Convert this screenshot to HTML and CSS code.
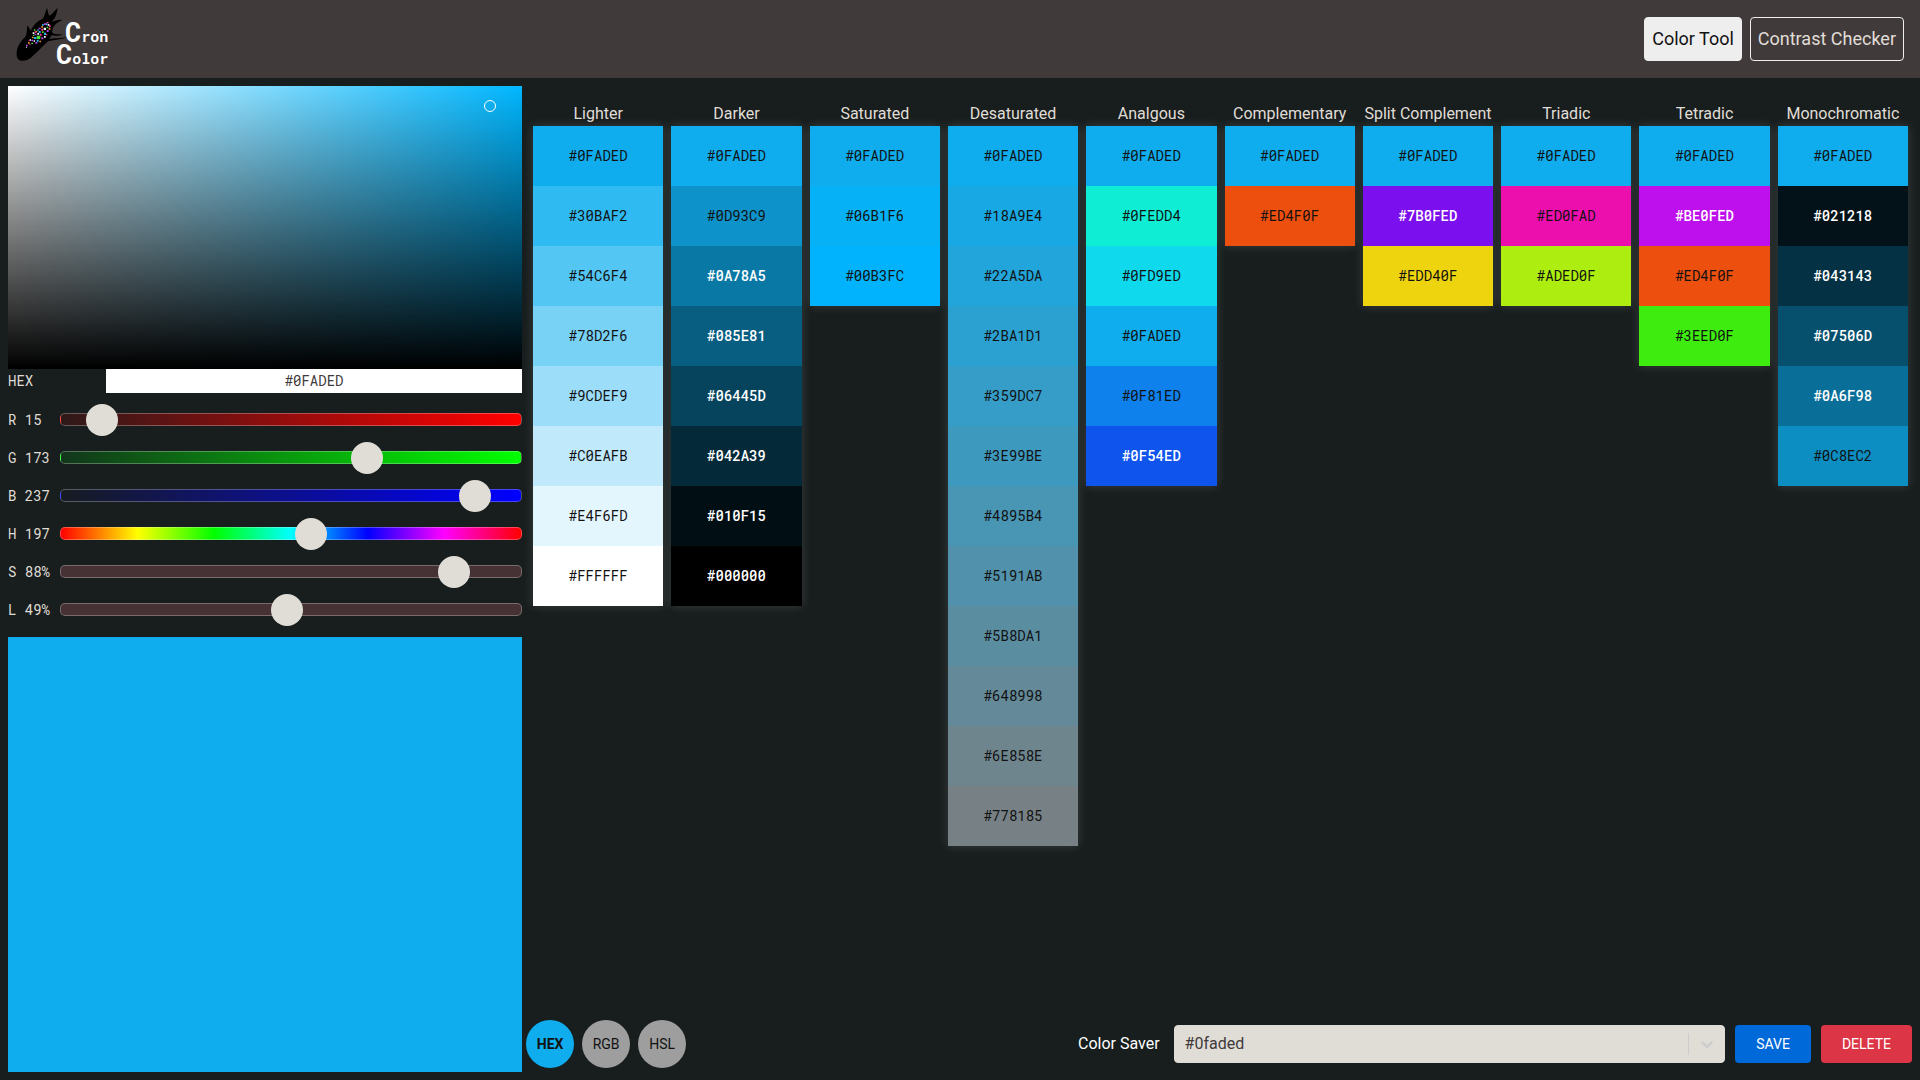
FILE: index.html
```html
<!DOCTYPE html>
<html lang="en">
<head>
<meta charset="utf-8">
<meta name="viewport" content="width=device-width, initial-scale=1">
<title>Cron Color</title>
<link rel="stylesheet" href="styles.css">
</head>
<body>
<header class="topbar">
  <a class="brand" href="#">
    <svg class="brand-mark" viewBox="48 24 156 162" width="52" height="54" aria-hidden="true">
      <path d="M50 158C50 142 62 124 76 110C82 100 80 90 82 76C86 82 90 86 92 92C100 74 112 62 128 56C136 46 136 34 141 24C144 34 144 42 148 47C156 44 164 32 172 24C172 42 164 58 154 66C164 64 176 58 187 60C174 66 162 74 158 86C156 92 156 96 158 100C168 104 178 102 188 104C176 108 166 108 156 106C150 110 150 114 148 117C160 114 178 116 200 112C182 120 160 120 144 124C128 138 116 154 98 168C84 184 62 186 55 178C50 172 50 166 50 158Z" fill="#000"/>
      <g fill="#f08a28"><path d="M84 126h5v5h-5zM96 110h5v5h-5zM107 92h5v5h-5zM124 78h5v5h-5zM133 100h5v5h-5zM146 84h5v5h-5zM118 122h5v5h-5z"/></g>
      <g fill="#b040e8"><path d="M78 134h5v5h-5zM94 119h6v5h-6zM104 101h5v5h-5zM116 83h6v5h-6zM132 70h6v5h-6zM140 90h6v6h-6zM124 112h6v6h-6zM106 126h6v5h-6z"/></g>
      <g fill="#fff"><path d="M78 140h3v3h-3zM89 118h4v4h-4zM98 97h5v5h-5zM112 99h5v5h-5zM131 83h7v7h-7zM143 72h5v5h-5zM132 108h5v5h-5zM101 121h4v4h-4z"/></g>
      <g fill="#46df35"><path d="M110 107h11v10h-11zM102 88h4v4h-4zM126 94h5v5h-5zM140 80h5v5h-5zM99 104h4v4h-4zM94 128h5v4h-5z"/></g>
      <g fill="#2fb4ee"><path d="M102 111h7v6h-7zM116 93h6v6h-6zM132 98h6v7h-6zM126 72h5v5h-5zM112 88h4v4h-4zM138 70h4v6h-4zM110 119h6v6h-6z"/></g>
      <g fill="#f03c8c"><path d="M86 120h3v4h-3zM104 94h5v5h-5zM119 101h6v6h-6zM124 86h5v6h-5zM140 66h6v4h-6zM147 76h5v6h-5zM138 102h4v4h-4zM88 131h4v3h-4z"/></g>
    </svg>
    <span class="brand-name"><span>Cron</span><span>Color</span></span>
  </a>
  <nav class="nav">
    <button class="nav-btn nav-btn-active" type="button">Color Tool</button>
    <button class="nav-btn" type="button">Contrast Checker</button>
  </nav>
</header>
<main class="app">
  <section class="controls">
    <div class="picker"><span class="picker-cursor"></span></div>
    <div class="hex-row"><label for="hex">HEX</label><input id="hex" type="text" value="#0FADED"></div>
    <div class="sliders">
      <div class="slider"><label for="r">R 15</label><input id="r" class="red" type="range" min="0" max="255" value="15"></div>
      <div class="slider"><label for="g">G 173</label><input id="g" class="green" type="range" min="0" max="255" value="173"></div>
      <div class="slider"><label for="b">B 237</label><input id="b" class="blue" type="range" min="0" max="255" value="237"></div>
      <div class="slider"><label for="h">H 197</label><input id="h" class="hue" type="range" min="0" max="360" value="197"></div>
      <div class="slider"><label for="s">S 88%</label><input id="s" type="range" min="0" max="100" value="88"></div>
      <div class="slider"><label for="l">L 49%</label><input id="l" type="range" min="0" max="100" value="49"></div>
    </div>
    <div class="preview" style="background:#0FADED"></div>
  </section>
  <section class="workspace">
    <div class="palettes">
      <div class="palette"><h2>Lighter</h2><div class="stack">
        <button class="swatch" style="background:#0FADED">#0FADED</button>
        <button class="swatch" style="background:#30BAF2">#30BAF2</button>
        <button class="swatch" style="background:#54C6F4">#54C6F4</button>
        <button class="swatch" style="background:#78D2F6">#78D2F6</button>
        <button class="swatch" style="background:#9CDEF9">#9CDEF9</button>
        <button class="swatch" style="background:#C0EAFB">#C0EAFB</button>
        <button class="swatch" style="background:#E4F6FD">#E4F6FD</button>
        <button class="swatch" style="background:#FFFFFF">#FFFFFF</button>
      </div></div>
      <div class="palette"><h2>Darker</h2><div class="stack">
        <button class="swatch" style="background:#0FADED">#0FADED</button>
        <button class="swatch" style="background:#0D93C9">#0D93C9</button>
        <button class="swatch on-dark" style="background:#0A78A5">#0A78A5</button>
        <button class="swatch on-dark" style="background:#085E81">#085E81</button>
        <button class="swatch on-dark" style="background:#06445D">#06445D</button>
        <button class="swatch on-dark" style="background:#042A39">#042A39</button>
        <button class="swatch on-dark" style="background:#010F15">#010F15</button>
        <button class="swatch on-dark" style="background:#000000">#000000</button>
      </div></div>
      <div class="palette"><h2>Saturated</h2><div class="stack">
        <button class="swatch" style="background:#0FADED">#0FADED</button>
        <button class="swatch" style="background:#06B1F6">#06B1F6</button>
        <button class="swatch" style="background:#00B3FC">#00B3FC</button>
      </div></div>
      <div class="palette"><h2>Desaturated</h2><div class="stack">
        <button class="swatch" style="background:#0FADED">#0FADED</button>
        <button class="swatch" style="background:#18A9E4">#18A9E4</button>
        <button class="swatch" style="background:#22A5DA">#22A5DA</button>
        <button class="swatch" style="background:#2BA1D1">#2BA1D1</button>
        <button class="swatch" style="background:#359DC7">#359DC7</button>
        <button class="swatch" style="background:#3E99BE">#3E99BE</button>
        <button class="swatch" style="background:#4895B4">#4895B4</button>
        <button class="swatch" style="background:#5191AB">#5191AB</button>
        <button class="swatch" style="background:#5B8DA1">#5B8DA1</button>
        <button class="swatch" style="background:#648998">#648998</button>
        <button class="swatch" style="background:#6E858E">#6E858E</button>
        <button class="swatch" style="background:#778185">#778185</button>
      </div></div>
      <div class="palette"><h2>Analgous</h2><div class="stack">
        <button class="swatch" style="background:#0FADED">#0FADED</button>
        <button class="swatch" style="background:#0FEDD4">#0FEDD4</button>
        <button class="swatch" style="background:#0FD9ED">#0FD9ED</button>
        <button class="swatch" style="background:#0FADED">#0FADED</button>
        <button class="swatch" style="background:#0F81ED">#0F81ED</button>
        <button class="swatch on-dark" style="background:#0F54ED">#0F54ED</button>
      </div></div>
      <div class="palette"><h2>Complementary</h2><div class="stack">
        <button class="swatch" style="background:#0FADED">#0FADED</button>
        <button class="swatch" style="background:#ED4F0F">#ED4F0F</button>
      </div></div>
      <div class="palette"><h2>Split Complement</h2><div class="stack">
        <button class="swatch" style="background:#0FADED">#0FADED</button>
        <button class="swatch on-dark" style="background:#7B0FED">#7B0FED</button>
        <button class="swatch" style="background:#EDD40F">#EDD40F</button>
      </div></div>
      <div class="palette"><h2>Triadic</h2><div class="stack">
        <button class="swatch" style="background:#0FADED">#0FADED</button>
        <button class="swatch" style="background:#ED0FAD">#ED0FAD</button>
        <button class="swatch" style="background:#ADED0F">#ADED0F</button>
      </div></div>
      <div class="palette"><h2>Tetradic</h2><div class="stack">
        <button class="swatch" style="background:#0FADED">#0FADED</button>
        <button class="swatch on-dark" style="background:#BE0FED">#BE0FED</button>
        <button class="swatch" style="background:#ED4F0F">#ED4F0F</button>
        <button class="swatch" style="background:#3EED0F">#3EED0F</button>
      </div></div>
      <div class="palette"><h2>Monochromatic</h2><div class="stack">
        <button class="swatch" style="background:#0FADED">#0FADED</button>
        <button class="swatch on-dark" style="background:#021218">#021218</button>
        <button class="swatch on-dark" style="background:#043143">#043143</button>
        <button class="swatch on-dark" style="background:#07506D">#07506D</button>
        <button class="swatch on-dark" style="background:#0A6F98">#0A6F98</button>
        <button class="swatch" style="background:#0C8EC2">#0C8EC2</button>
      </div></div>
    </div>
    <footer class="toolbar">
      <div class="formats">
        <button class="format format-active" type="button">HEX</button>
        <button class="format" type="button">RGB</button>
        <button class="format" type="button">HSL</button>
      </div>
      <form class="saver">
        <label for="saved">Color Saver</label>
        <div class="select">
          <select id="saved"><option>#0faded</option></select>
          <span class="select-icon">
            <svg viewBox="0 0 20 20" width="20" height="20" aria-hidden="true"><path d="M4.516 7.548c0.436-0.446 1.043-0.481 1.576 0l3.908 3.747 3.908-3.747c0.533-0.481 1.141-0.446 1.574 0 0.436 0.445 0.408 1.197 0 1.615-0.406 0.418-4.695 4.502-4.695 4.502-0.217 0.223-0.502 0.335-0.787 0.335s-0.57-0.112-0.789-0.335c0 0-4.287-4.084-4.695-4.502s-0.436-1.17 0-1.615z" fill="#ccc"/></svg>
          </span>
        </div>
        <button class="action save" type="button">SAVE</button>
        <button class="action delete" type="button">DELETE</button>
      </form>
    </footer>
  </section>
</main>
</body>
</html>
```
FILE: styles.css
```css
:root {
  --bg: #171e1d;
  --bar: #413a3a;
  --bone: #e0ddd7;
  --sans: Roboto, "Liberation Sans", sans-serif;
  --mono: "Roboto Mono", "DejaVu Sans Mono", monospace;
}

* { box-sizing: border-box; }

body {
  margin: 0;
  min-height: 100vh;
  display: flex;
  flex-direction: column;
  background: var(--bg);
  color: var(--bone);
  font: 16px/24px var(--sans);
}

button, input, select { font: inherit; color: inherit; margin: 0; }
button { cursor: pointer; }

.topbar {
  display: flex;
  justify-content: space-between;
  align-items: center;
  height: 78px;
  padding: 0 16px;
  background: var(--bar);
}

.brand {
  display: flex;
  align-items: flex-start;
  height: 62px;
  color: #fff;
  text-decoration: none;
}

.brand-mark { margin-right: -12px; }

.brand-name {
  display: flex;
  flex-direction: column;
  align-items: flex-end;
  gap: 2px;
  padding-top: 14px;
  font: bold 15px/20px var(--mono);
}

.brand-name span { display: block; height: 20px; }
.brand-name span::first-letter { font-size: 27px; line-height: 20px; }

.nav { display: flex; gap: 8px; }

.nav-btn {
  height: 44px;
  padding: 0 7px;
  border: 1px solid #eee;
  border-radius: 4px;
  background: transparent;
  font-size: 18px;
}

.nav-btn-active { background: #eee; color: #111; }

.app {
  flex: 1;
  display: grid;
  grid-template-columns: 27% 1fr;
  column-gap: 4px;
  padding: 8px;
}

.controls { display: flex; flex-direction: column; }

.picker {
  position: relative;
  aspect-ratio: 20 / 11;
  background:
    linear-gradient(to top, #000, transparent),
    linear-gradient(to right, #fff, hsl(197 100% 50%));
}

.picker-cursor {
  position: absolute;
  left: 93.7%;
  top: 7%;
  width: 12px;
  height: 12px;
  margin: -6px;
  border: 1px solid #fff;
  border-radius: 50%;
}

.hex-row {
  display: grid;
  grid-template-columns: 98px 1fr;
  font: 14px/24px var(--mono);
}

.hex-row input {
  width: 100%;
  height: 24px;
  padding: 0;
  border: 0;
  background: #fff;
  color: #413a3a;
  text-align: center;
}

.sliders { padding: 8px 0; }

.slider {
  display: grid;
  grid-template-columns: 52px 1fr;
  align-items: center;
  height: 38px;
  font: 14px/24px var(--mono);
}

.slider input {
  appearance: none;
  width: 100%;
  height: 13px;
  border: 1px solid rgb(255 255 255 / .28);
  border-radius: 5px;
  background: #463234;
}

.slider input::-webkit-slider-thumb {
  appearance: none;
  width: 32px;
  height: 32px;
  border-radius: 50%;
  background: var(--bone);
}

.slider .red { background: linear-gradient(to right, #2e1919, #f00); }
.slider .green { background: linear-gradient(to right, #12351b, #0f0); }
.slider .blue { background: linear-gradient(to right, #171c20, #00f); }
.slider .hue { background: linear-gradient(to right, #f00, #ff0, #0f0, #0ff, #00f, #f0f, #f00); }

.preview { flex: 1; min-height: 200px; }

.workspace {
  display: flex;
  flex-direction: column;
  justify-content: space-between;
  min-width: 0;
}

.palettes {
  display: grid;
  grid-template-columns: repeat(10, minmax(0, 1fr));
  align-items: start;
  gap: 8px;
  padding: 16px 4px 0 7px;
}

.palette h2 {
  margin: 0;
  font-size: 16px;
  line-height: 24px;
  font-weight: 400;
  text-align: center;
  white-space: nowrap;
}

.stack {
  display: flex;
  flex-direction: column;
  box-shadow: 0 0 10px rgb(255 255 255 / .15);
}

.swatch {
  height: 60px;
  padding: 0;
  border: 0;
  color: #111;
  font: 14px/24px var(--mono);
}

.on-dark { color: #fff; font-weight: 500; }

.toolbar {
  display: flex;
  justify-content: space-between;
  align-items: center;
  height: 56px;
}

.formats { display: flex; gap: 8px; }

.format {
  width: 48px;
  height: 48px;
  padding: 0;
  border: 0;
  border-radius: 50%;
  background: #9e9e9e;
  color: #111;
  font-size: 14px;
}

.format-active { background: #0faded; font-weight: 700; }

.saver {
  display: flex;
  align-items: center;
  width: 834px;
  max-width: 75%;
}

.saver label { margin-right: 14px; color: #fff; white-space: nowrap; }

.select { position: relative; flex: 1; }

.select select {
  appearance: none;
  display: block;
  width: 100%;
  height: 38px;
  padding: 0 10px;
  border: 1px solid var(--bone);
  border-radius: 4px;
  background: var(--bone);
  color: #413a3a;
}

.select-icon {
  position: absolute;
  top: 8px;
  right: 0;
  height: 22px;
  padding: 1px 8px;
  border-left: 1px solid #ccc;
  line-height: 0;
  pointer-events: none;
}

.action {
  height: 38px;
  padding: 0 21px;
  border: 0;
  border-radius: 4px;
  color: #fff;
  font-size: 14px;
}

.save { margin: 0 10px; background: #0069d9; }
.delete { background: #dc3545; }
```
